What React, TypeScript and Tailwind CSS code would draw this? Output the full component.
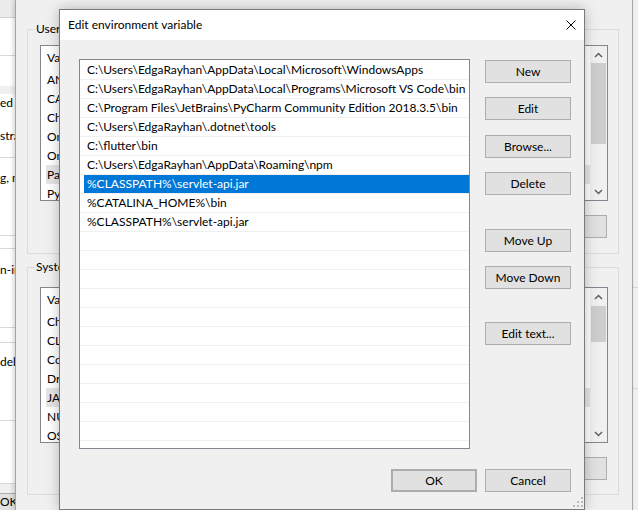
import React from 'react'

const PATHS = [
  'C:\\Users\\EdgaRayhan\\AppData\\Local\\Microsoft\\WindowsApps',
  'C:\\Users\\EdgaRayhan\\AppData\\Local\\Programs\\Microsoft VS Code\\bin',
  'C:\\Program Files\\JetBrains\\PyCharm Community Edition 2018.3.5\\bin',
  'C:\\Users\\EdgaRayhan\\.dotnet\\tools',
  'C:\\flutter\\bin',
  'C:\\Users\\EdgaRayhan\\AppData\\Roaming\\npm',
  '%CLASSPATH%\\servlet-api.jar',
  '%CATALINA_HOME%\\bin',
  '%CLASSPATH%\\servlet-api.jar',
]
const SELECTED = 6
const ROWS = 21

const USER_VARS = ['ANDROID_HOME', 'CATALINA_HOME', 'ChocolateyLastPathUpdate', 'OneDrive', 'OneDriveConsumer', 'Path', 'PyCharm Community Edition']
const SYS_VARS = ['ChocolateyInstall', 'CLASSPATH', 'ComSpec', 'DriverData', 'JAVA_HOME', 'NUMBER_OF_PROCESSORS', 'OS']

function Chevron({ up }: { up?: boolean }) {
  return (
    <svg width="9" height="6" viewBox="0 0 9 6">
      <polyline
        points={up ? '1,5 4.5,1.5 8,5' : '1,1 4.5,4.5 8,1'}
        fill="none"
        stroke="#606060"
        strokeWidth="1.5"
      />
    </svg>
  )
}

function Btn({ label, className = '' }: { label: string; className?: string }) {
  return (
    <button
      className={`w-[86px] h-[23px] flex items-center justify-center bg-[#e1e1e1] border border-[#adadad] text-[12px] text-black ${className}`}
    >
      {label}
    </button>
  )
}

// list view behind the dialog (user / system variables)
function VarList({ names, hl, thumb }: { names: string[]; hl: number; thumb: string }) {
  return (
    <div className="w-[568px] h-[156px] border border-[#828790] bg-white flex overflow-hidden">
      <div className="flex-1 flex flex-col">
        <div className="h-[24px] flex items-center pl-[6px] shrink-0">
          <span className="w-[170px]">Variable</span>
          <span>Value</span>
        </div>
        {names.map((n, i) => (
          <div
            key={i}
            className={`h-[19px] shrink-0 flex items-center ml-[5px] pl-px ${i === hl ? 'bg-[#e5e5e5]' : ''}`}
          >
            {n}
          </div>
        ))}
      </div>
      <div className="w-[17px] flex flex-col bg-[#f0f0f0]">
        <div className="h-[17px] flex items-center justify-center"><Chevron up /></div>
        <div className="flex-1">
          <div className={`mx-px bg-[#cdcdcd] ${thumb}`} />
        </div>
        <div className="h-[17px] flex items-center justify-center"><Chevron /></div>
      </div>
    </div>
  )
}

function BehindButtons() {
  return (
    <div className="w-[568px] flex justify-end gap-[8px] pr-px mt-[14px]">
      <div className="w-[75px] h-[23px] bg-[#e1e1e1] border border-[#adadad]" />
      <div className="w-[75px] h-[23px] bg-[#e1e1e1] border border-[#adadad]" />
      <div className="w-[75px] h-[23px] bg-[#e1e1e1] border border-[#adadad]" />
    </div>
  )
}

export default function App() {
  return (
    <div className="relative w-[638px] h-[510px] overflow-hidden bg-[#f0f0f0] text-[12px] text-black font-['Lato','Noto_Sans',sans-serif] whitespace-nowrap">
      {/* far left window */}
      <div className="absolute left-0 top-0 w-[40px] h-[510px] bg-white flex flex-col overflow-hidden leading-[16px]">
        <div className="h-[18px] shrink-0 bg-[#ececec] border-b border-[#d0d0d0]" />
        <div className="h-[38px] shrink-0 border-b border-[#d9d9d9]" />
        <div className="h-[30px] shrink-0" />
        <div className="h-[8px] shrink-0 bg-[#f0f0f0]" />
        <div className="h-[64px] shrink-0 border-b border-[#d9d9d9] pt-px">
          <div>ed</div>
          <div className="mt-[17px]">strators</div>
        </div>
        <div className="h-[78px] shrink-0 border-b border-[#d9d9d9] pt-[12px]">g, memory usage</div>
        <div className="h-[13px] shrink-0 border-b border-[#d9d9d9]" />
        <div className="h-[79px] shrink-0 border-b border-[#d9d9d9] pt-[13px]">n-info</div>
        <div className="h-[15px] shrink-0 border-b border-[#d9d9d9]" />
        <div className="h-[78px] shrink-0 border-b border-[#d9d9d9] pt-[11px]">debugging</div>
        <div className="h-[63px] shrink-0 border-b border-[#d9d9d9]" />
        <div className="flex-1 bg-[#f0f0f0] pt-[9px]">
          <div className="h-[20px] border-t border-[#adadad] bg-[#e1e1e1]">OK</div>
        </div>
      </div>

      {/* far right window */}
      <div className="absolute left-[600px] top-0 w-[38px] h-[510px] bg-[#f0f0f0] flex flex-col">
        <div className="h-[288px] shrink-0 border-b border-[#d5d5d5]" />
        <div className="h-[101px] shrink-0 border-b border-[#d5d5d5]" />
      </div>

      {/* Environment Variables window */}
      <div className="absolute left-[15px] top-0 w-[618px] h-[510px] bg-[#f0f0f0] border-l border-r border-[#a5a5a5] shadow-[-2px_0_4px_rgba(0,0,0,0.15)] pt-[21px] pl-[11px] flex flex-col">
        <fieldset className="w-[592px] h-[233px] shrink-0 border border-[#dcdcdc]">
          <legend className="ml-[7px] px-px leading-[16px]">User variables for EdgaRayhan</legend>
          <div className="pl-[12px] pt-[8px]">
            <VarList names={USER_VARS} hl={5} thumb="h-[81px]" />
            <BehindButtons />
          </div>
        </fieldset>
        <fieldset className="w-[592px] h-[236px] shrink-0 mt-[5px] border border-[#dcdcdc]">
          <legend className="ml-[7px] px-px leading-[16px]">System variables</legend>
          <div className="pl-[12px] pt-[12px]">
            <VarList names={SYS_VARS} hl={4} thumb="mt-px h-[36px]" />
            <BehindButtons />
          </div>
        </fieldset>
      </div>

      {/* Edit environment variable dialog */}
      <div className="absolute left-[59px] top-[9px] w-[526px] h-[501px] border border-[#7a7a7a] bg-[#f0f0f0] shadow-[0_0_12px_rgba(0,0,0,0.25)] flex flex-col">
        <div className="h-[30px] shrink-0 bg-white flex items-center justify-between pl-[8px] pr-[8px]">
          <span>Edit environment variable</span>
          <svg width="10" height="10" viewBox="0 0 10 10">
            <path d="M0.5 0.5 L9.5 9.5 M9.5 0.5 L0.5 9.5" stroke="#000" strokeWidth="1" />
          </svg>
        </div>

        <div className="flex-1 flex flex-col pl-[19px] pt-[19px]">
          <div className="flex">
            <div className="w-[391px] h-[390px] border border-[#828790] bg-white overflow-hidden pt-px">
              {Array.from({ length: ROWS }).map((_, i) => (
                <div key={i} className="h-[19px] border-b border-[#f0f0f0]">
                  <div
                    className={`h-[18px] ml-[4px] pl-[3px] leading-[18px] ${i === SELECTED ? 'bg-[#0078d7] text-white' : ''}`}
                  >
                    {PATHS[i] ?? ''}
                  </div>
                </div>
              ))}
            </div>

            <div className="ml-[15px] pt-px flex flex-col">
              <Btn label="New" />
              <Btn label="Edit" className="mt-[14px]" />
              <Btn label="Browse..." className="mt-[15px]" />
              <Btn label="Delete" className="mt-[14px]" />
              <Btn label="Move Up" className="mt-[34px]" />
              <Btn label="Move Down" className="mt-[14px]" />
              <Btn label="Edit text..." className="mt-[33px]" />
            </div>
          </div>

          <div className="flex justify-end gap-[8px] pr-[13px] mt-[20px]">
            <Btn label="OK" className="border-2 border-[#0078d7]" />
            <Btn label="Cancel" />
          </div>
        </div>

        {/* size grip */}
        <svg className="absolute right-[1px] bottom-[2px]" width="10" height="10" viewBox="0 0 10 10">
          <rect x="8" y="0" width="2" height="2" fill="#bcbcbc" />
          <rect x="4" y="4" width="2" height="2" fill="#bcbcbc" />
          <rect x="8" y="4" width="2" height="2" fill="#bcbcbc" />
          <rect x="0" y="8" width="2" height="2" fill="#bcbcbc" />
          <rect x="4" y="8" width="2" height="2" fill="#bcbcbc" />
          <rect x="8" y="8" width="2" height="2" fill="#bcbcbc" />
        </svg>
      </div>
    </div>
  )
}
